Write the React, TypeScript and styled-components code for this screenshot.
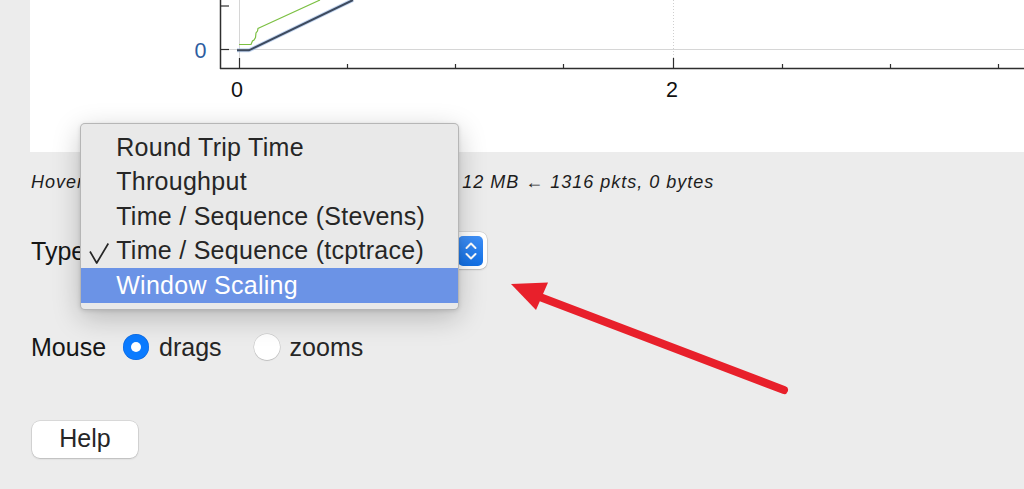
import React from 'react';
import styled, { createGlobalStyle } from 'styled-components';

const GlobalStyle = createGlobalStyle`
  html, body {
    margin: 0;
    padding: 0;
    background: #ececec;
    overflow: hidden;
  }
  body {
    font-family: "Liberation Sans", Arial, sans-serif;
  }
`;

const Page = styled.div`
  position: relative;
  width: 1024px;
  height: 489px;
  background: #ececec;
  display: flex;
  flex-direction: column;
`;

const PlotPanel = styled.div`
  margin-left: 30px;
  height: 152px;
  background: #ffffff;

  svg {
    display: block;
  }
`;

const Controls = styled.div`
  display: flex;
  flex-direction: column;
  align-items: flex-start;
  padding-left: 31px;
`;

const Hint = styled.div`
  margin-top: 19px;
  font-style: italic;
  font-size: 18px;
  line-height: 22px;
  letter-spacing: 1px;
  color: #1d1d1d;
  white-space: nowrap;
`;

const Row = styled.div<{ $top: number }>`
  display: flex;
  align-items: center;
  margin-top: ${p => p.$top}px;
`;

const Label = styled.span`
  font-size: 25px;
  line-height: 30px;
  color: #161616;
`;

const PopupWrap = styled.div`
  position: relative;
  margin-left: 5px;
`;

const PopupButton = styled.div`
  box-sizing: border-box;
  width: 397px;
  height: 37px;
  padding: 0 4px 0 10px;
  display: flex;
  align-items: center;
  justify-content: space-between;
  background: #ffffff;
  border-radius: 7px;
  box-shadow: 0 0 0 0.5px rgba(0, 0, 0, 0.16), 0 1px 2px rgba(0, 0, 0, 0.14);
  font-size: 25px;
  color: #262626;
`;

const Stepper = styled.span`
  width: 25px;
  height: 30px;
  border-radius: 5px;
  background: linear-gradient(#3f90f8, #1170e6);
  display: flex;
  align-items: center;
  justify-content: center;
`;

const Menu = styled.div`
  position: absolute;
  left: -10px;
  top: -109px;
  width: 377px;
  padding: 6px 0;
  background: #e9e9e9;
  border: 0.5px solid rgba(0, 0, 0, 0.22);
  border-radius: 5px;
  box-shadow: 0 8px 28px rgba(0, 0, 0, 0.22), 0 1px 4px rgba(0, 0, 0, 0.12);
  z-index: 2;
`;

const MenuItem = styled.div<{ $active?: boolean }>`
  display: flex;
  align-items: center;
  height: 34.5px;
  font-size: 25px;
  letter-spacing: 0.28px;
  white-space: nowrap;
  color: ${p => (p.$active ? '#ffffff' : '#262626')};
  background: ${p => (p.$active ? '#6b93e6' : 'transparent')};
`;

const CheckCell = styled.span`
  width: 35px;
  height: 100%;
  flex: none;
  display: flex;
  align-items: center;
`;

const RadioOption = styled.label<{ $offset: number }>`
  display: flex;
  align-items: center;
  gap: 10px;
  margin-left: ${p => p.$offset}px;
  font-size: 25px;
  line-height: 30px;
  color: #262626;
`;

const RadioDot = styled.span<{ $checked?: boolean }>`
  box-sizing: border-box;
  width: 26px;
  height: 26px;
  border-radius: 50%;
  display: flex;
  align-items: center;
  justify-content: center;
  background: ${p => (p.$checked ? '#0b7bff' : '#ffffff')};
  box-shadow: ${p =>
    p.$checked
      ? 'inset 0 0 0 0.5px rgba(0, 60, 160, 0.4)'
      : '0 0 0 0.5px rgba(0, 0, 0, 0.18), 0 1px 1px rgba(0, 0, 0, 0.1)'};

  &::after {
    content: '';
    display: ${p => (p.$checked ? 'block' : 'none')};
    width: 10px;
    height: 10px;
    border-radius: 50%;
    background: #ffffff;
  }
`;

const HelpButton = styled.button`
  margin-top: 59px;
  margin-left: 1px;
  width: 106px;
  height: 37px;
  border: none;
  border-radius: 8px;
  background: #ffffff;
  box-shadow: 0 0 0 0.5px rgba(0, 0, 0, 0.16), 0 1px 2px rgba(0, 0, 0, 0.14);
  font-family: "Liberation Sans", Arial, sans-serif;
  font-size: 25px;
  line-height: 30px;
  color: #262626;
  padding: 0 0 3px;
`;

const Annotation = styled.svg`
  position: absolute;
  left: 500px;
  top: 270px;
  pointer-events: none;
`;

const graphTypes = [
  'Round Trip Time',
  'Throughput',
  'Time / Sequence (Stevens)',
  'Time / Sequence (tcptrace)',
  'Window Scaling',
];

const minorTicks = [347, 455, 563, 782, 890, 998];

const Plot = () => (
  <svg width="994" height="152" viewBox="30 0 994 152">
    <line x1="229" y1="49.5" x2="1024" y2="49.5" stroke="#d6d6d6" strokeWidth="1" />
    <line x1="239.5" y1="0" x2="239.5" y2="68" stroke="#d6d6d6" strokeWidth="1" />
    <line x1="673.5" y1="0" x2="673.5" y2="68" stroke="#cfcfcf" strokeWidth="1" strokeDasharray="1 2" />

    <polyline points="237,50 250,50" fill="none" stroke="#e39a3a" strokeWidth="1.6" />
    <polyline
      points="237,50.3 249,50.3 353,0"
      fill="none"
      stroke="#9bbbe8"
      strokeWidth="4"
      strokeOpacity="0.6"
    />
    <polyline
      points="237,50.3 249,50.3 353,0"
      fill="none"
      stroke="#3d4a5e"
      strokeWidth="2"
    />
    <polyline
      points="239,44.5 251,44.5 252.5,41 254,40 255.5,37.5 256,33 257.5,31 258,28.5 260,27.5 320,0"
      fill="none"
      stroke="#7cc043"
      strokeWidth="1.2"
    />

    <line x1="220.5" y1="0" x2="220.5" y2="69" stroke="#2e2e2e" strokeWidth="1.5" />
    <line x1="220" y1="68.5" x2="1024" y2="68.5" stroke="#2e2e2e" strokeWidth="1.5" />
    <line x1="220" y1="6" x2="229" y2="6" stroke="#2e2e2e" strokeWidth="1.2" />
    <line x1="220" y1="49.5" x2="229" y2="49.5" stroke="#2e2e2e" strokeWidth="1.2" />

    <line x1="239.5" y1="58" x2="239.5" y2="68" stroke="#2e2e2e" strokeWidth="1.2" />
    <line x1="673.5" y1="58" x2="673.5" y2="68" stroke="#2e2e2e" strokeWidth="1.2" />
    {minorTicks.map(x => (
      <line key={x} x1={x + 0.5} y1="64" x2={x + 0.5} y2="68" stroke="#2e2e2e" strokeWidth="1.2" />
    ))}

    <text x="200.5" y="58" fontSize="21.5" fill="#2d5c9f" textAnchor="middle" fontFamily="Liberation Sans, Arial, sans-serif">0</text>
    <text x="237" y="97" fontSize="21.5" fill="#111" textAnchor="middle" fontFamily="Liberation Sans, Arial, sans-serif">0</text>
    <text x="672" y="97" fontSize="21.5" fill="#111" textAnchor="middle" fontFamily="Liberation Sans, Arial, sans-serif">2</text>
  </svg>
);

const CheckMark = () => (
  <svg width="35" height="34" viewBox="0 0 35 34">
    <polyline points="9,17.5 15.7,29 27.3,9.5" fill="none" stroke="#262626" strokeWidth="1.7" strokeLinejoin="round" />
  </svg>
);

const UpDown = () => (
  <svg width="14" height="22" viewBox="0 0 14 22">
    <polyline points="2.5,8 7,3.5 11.5,8" fill="none" stroke="#fff" strokeWidth="2" strokeLinecap="round" strokeLinejoin="round" />
    <polyline points="2.5,14 7,18.5 11.5,14" fill="none" stroke="#fff" strokeWidth="2" strokeLinecap="round" strokeLinejoin="round" />
  </svg>
);

const App = () => {
  const selected = 3;
  const highlighted = 4;

  return (
    <>
      <GlobalStyle />
      <Page>
        <PlotPanel>
          <Plot />
        </PlotPanel>

        <Controls>
          <Hint>Hover over the graph for details. → 18722 pkts, 12 MB ← 1316 pkts, 0 bytes</Hint>

          <Row $top={39}>
            <Label>Type</Label>
            <PopupWrap>
              <PopupButton>
                <span>{graphTypes[selected]}</span>
                <Stepper>
                  <UpDown />
                </Stepper>
              </PopupButton>
              <Menu>
                {graphTypes.map((t, i) => (
                  <MenuItem key={t} $active={i === highlighted}>
                    <CheckCell>{i === selected && <CheckMark />}</CheckCell>
                    {t}
                  </MenuItem>
                ))}
              </Menu>
            </PopupWrap>
          </Row>

          <Row $top={63}>
            <Label>Mouse</Label>
            <RadioOption $offset={17}>
              <RadioDot $checked />
              drags
            </RadioOption>
            <RadioOption $offset={32}>
              <RadioDot />
              zooms
            </RadioOption>
          </Row>

          <HelpButton>Help</HelpButton>
        </Controls>

        <Annotation width="300" height="130" viewBox="0 0 300 130">
          <line x1="32" y1="24" x2="284" y2="120" stroke="#e8202b" strokeWidth="8" strokeLinecap="round" />
          <polygon points="11,14 48,12.5 36,40" fill="#e8202b" />
        </Annotation>
      </Page>
    </>
  );
};

export default App;
